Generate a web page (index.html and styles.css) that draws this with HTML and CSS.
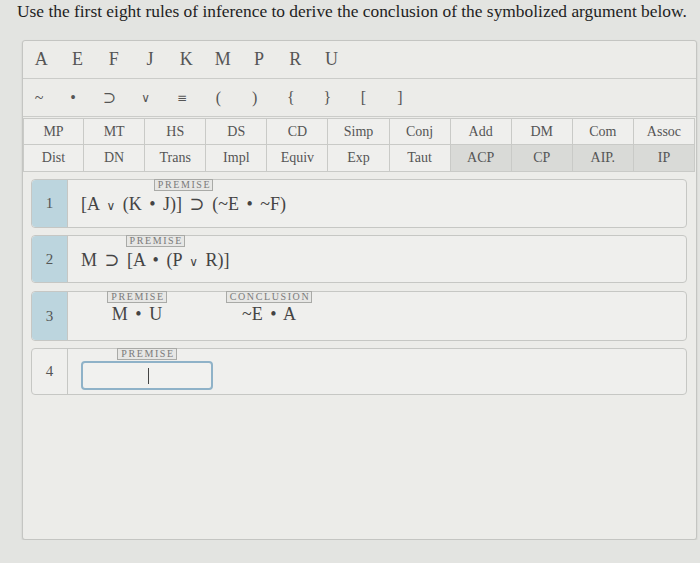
FILE: index.html
```html
<!DOCTYPE html>
<html>
<head>
<meta charset="utf-8">
<link rel="stylesheet" href="styles.css">
</head>
<body>
<p class="prompt">Use the first eight rules of inference to derive the conclusion of the symbolized argument below.</p>
<div class="panel">
  <div class="keyrow letters">
    <span>A</span><span>E</span><span>F</span><span>J</span><span>K</span><span>M</span><span>P</span><span>R</span><span>U</span>
  </div>
  <div class="keyrow symbols">
    <span>~</span><span>•</span><span>⊃</span><span class="sans">∨</span><span class="sans">≡</span><span>(</span><span>)</span><span>{</span><span>}</span><span>[</span><span>]</span>
  </div>
  <div class="rules">
    <div class="rule">MP</div><div class="rule">MT</div><div class="rule">HS</div><div class="rule">DS</div><div class="rule">CD</div><div class="rule">Simp</div><div class="rule">Conj</div><div class="rule">Add</div><div class="rule">DM</div><div class="rule">Com</div><div class="rule">Assoc</div>
    <div class="rule">Dist</div><div class="rule">DN</div><div class="rule">Trans</div><div class="rule">Impl</div><div class="rule">Equiv</div><div class="rule">Exp</div><div class="rule">Taut</div><div class="rule dark">ACP</div><div class="rule dark">CP</div><div class="rule dark">AIP.</div><div class="rule dark">IP</div>
  </div>
  <div class="proof">
    <div class="line l1">
      <div class="num given">1</div>
      <div class="content">
        <div class="col"><span class="tag">Premise</span><span class="formula">[A <span class="op">∨</span> (K • J)] ⊃ (~E • ~F)</span></div>
      </div>
    </div>
    <div class="line l2">
      <div class="num given">2</div>
      <div class="content">
        <div class="col"><span class="tag">Premise</span><span class="formula">M ⊃ [A • (P <span class="op">∨</span> R)]</span></div>
      </div>
    </div>
    <div class="line l3">
      <div class="num given">3</div>
      <div class="content">
        <div class="col"><span class="tag">Premise</span><span class="formula">M • U</span></div>
        <div class="col"><span class="tag">Conclusion</span><span class="formula">~E • A</span></div>
      </div>
    </div>
    <div class="line l4">
      <div class="num">4</div>
      <div class="content">
        <div class="col"><span class="tag">Premise</span><span class="input"><span class="caret"></span></span></div>
      </div>
    </div>
  </div>
</div>
</body>
</html>
```

FILE: styles.css
```css
html, body {
  margin: 0;
  padding: 0;
  background: #e3e4e1;
  font-family: "Liberation Serif", "DejaVu Serif", serif;
  color: #333;
}

.prompt {
  margin: 0;
  padding: 2px 0 0 17px;
  font-size: 17.4px;
  line-height: 19px;
  color: #1e1e1e;
  white-space: nowrap;
}

.panel {
  margin: 19px 3px 0 22px;
  height: 498px;
  background: #ecece9;
  border: 1px solid #c4c5c2;
  border-radius: 3px;
  box-shadow: 0 1px 2px rgba(0,0,0,0.12);
}

.keyrow {
  display: flex;
  align-items: center;
  height: 37px;
  border-bottom: 1px solid #cbccc9;
}
.keyrow span {
  width: 36.3px;
  text-align: center;
}
.letters span {
  font-size: 18px;
  color: #555;
}
.symbols span {
  font-size: 16px;
  color: #555;
}
.symbols span:first-child { width: 32px; }
.symbols .sans {
  font-family: "DejaVu Sans", sans-serif;
  font-size: 12px;
}

.rules {
  margin-top: 1px;
  display: grid;
  grid-template-columns: repeat(11, 1fr);
  grid-auto-rows: 26px;
  border-top: 1px solid #c9cac7;
  border-bottom: 1px solid #c9cac7;
  width: 672px;
}
.rule {
  display: flex;
  align-items: center;
  justify-content: center;
  font-size: 14px;
  color: #555;
  background: #efefed;
  border-right: 1px solid #c9cac7;
}
.rule:nth-child(-n+11) { border-bottom: 1px solid #c9cac7; }
.rule:nth-child(11n+1) { border-left: 1px solid #c9cac7; }
.rule.dark { background: #d9dad7; }

.proof {
  padding: 7px 9px 0 8px;
  display: flex;
  flex-direction: column;
  gap: 7px;
}
.line {
  display: flex;
  background: #efefed;
  border: 1px solid #c6c7c4;
  border-radius: 4px;
}
.l1 { height: 47px; }
.l2 { height: 46px; }
.l3 { height: 48px; margin-top: 1px; }
.l4 { height: 45px; }

.num {
  width: 35px;
  flex: none;
  display: flex;
  align-items: center;
  justify-content: center;
  font-size: 15px;
  color: #555;
  border-right: 1px solid #c6c7c4;
  border-radius: 4px 0 0 4px;
}
.num.given { background: #bcd5de; }

.content {
  display: flex;
  gap: 20px;
  padding-left: 13px;
}
.col {
  display: flex;
  flex-direction: column;
  align-items: center;
  min-width: 112px;
}
.tag {
  margin-top: -1px;
  font-size: 10px;
  line-height: 10px;
  text-transform: uppercase;
  letter-spacing: 1.6px;
  color: #7a7a7a;
  border: 1px solid #a9aaa7;
  background: #e7e7e5;
  padding: 0 1px 0 3px;
}
.formula {
  margin-top: 2px;
  font-size: 18px;
  line-height: 22px;
  word-spacing: 3px;
  color: #444;
  white-space: nowrap;
}
.op {
  font-family: "DejaVu Sans", sans-serif;
  font-size: 12px;
}
.l3 .formula { margin-top: 0; }

.input {
  margin-top: 1px;
  width: 128px;
  height: 25px;
  border: 2px solid #8fb2c8;
  border-radius: 4px;
  background: #f1f1ef;
  display: flex;
  align-items: center;
  justify-content: center;
}
.caret {
  width: 1px;
  height: 16px;
  background: #444;
  margin-left: 2px;
}
```
